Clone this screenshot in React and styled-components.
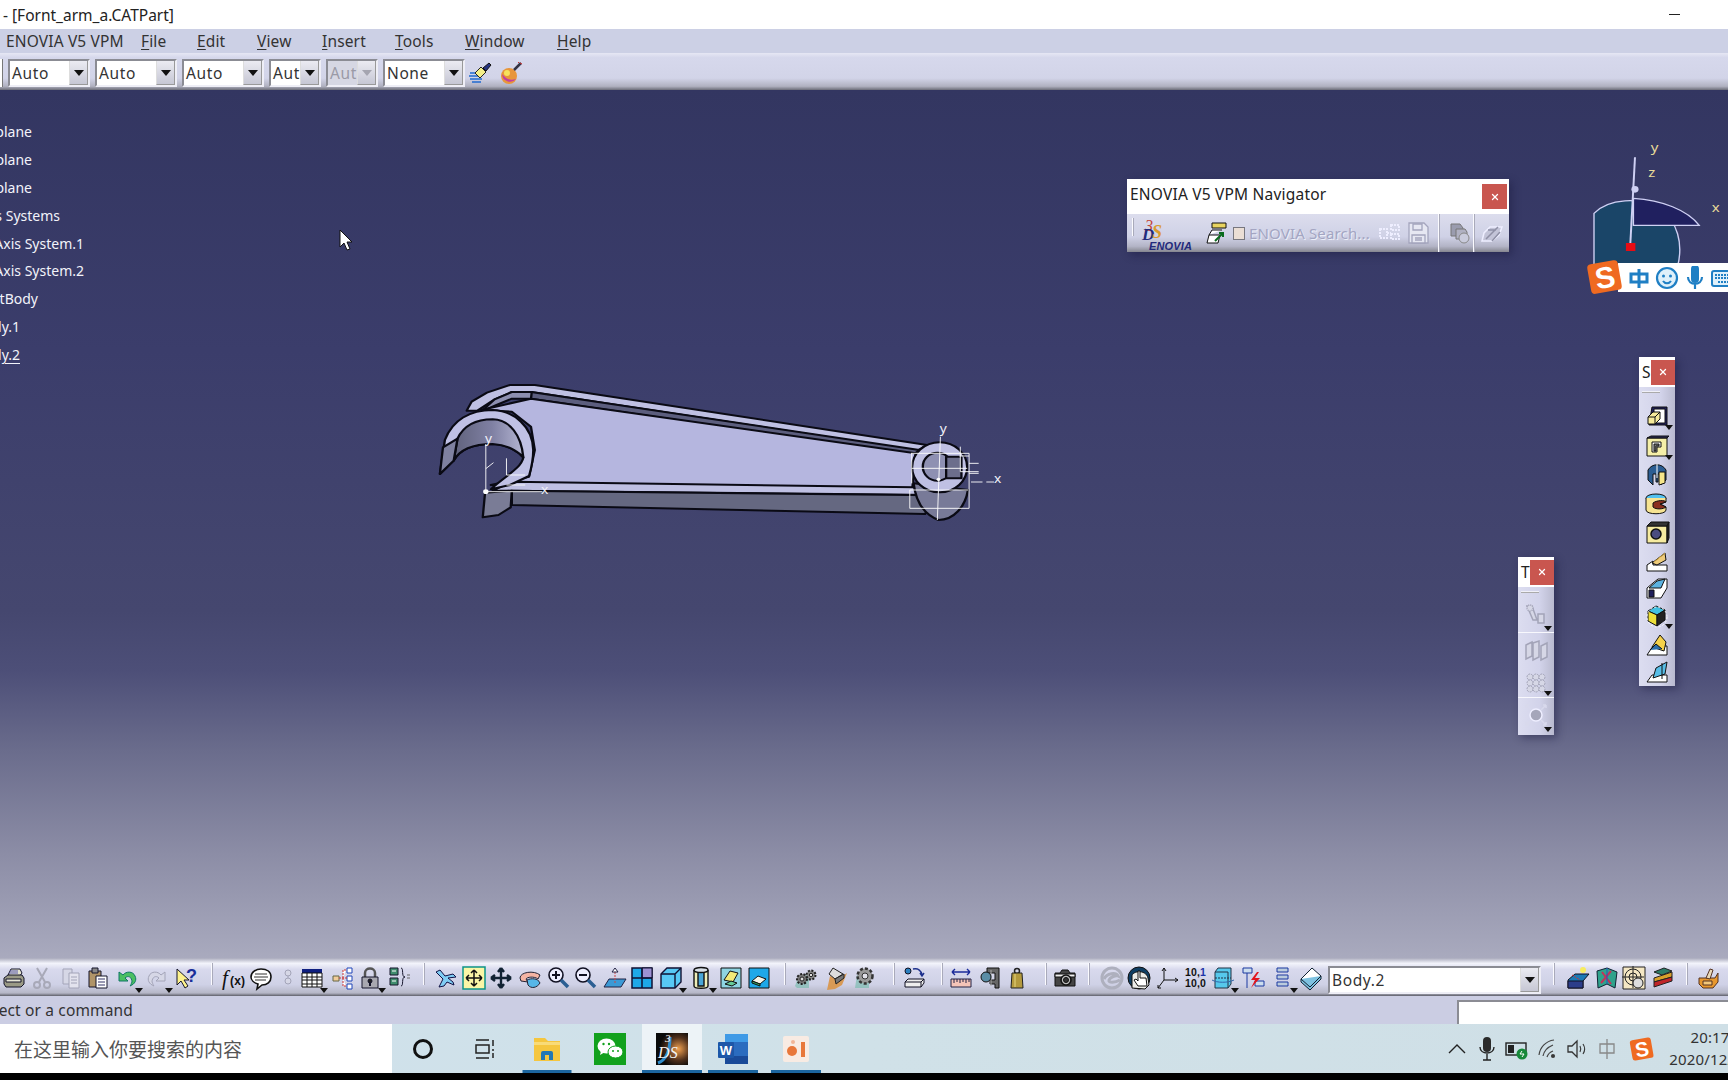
import React from 'react';
import styled, { createGlobalStyle } from 'styled-components';
import { X } from 'lucide-react';

const Global = createGlobalStyle`
  html, body { margin: 0; padding: 0; background: #000; }
  #root { width: 1728px; height: 1080px; overflow: hidden; }
  * { box-sizing: border-box; }
`;
const UI = `"Noto Sans", "Open Sans", sans-serif`;

const Page = styled.div`
  width: 1728px; height: 1080px; display: flex; flex-direction: column; overflow: hidden;
  font-family: ${UI}; font-size: 15.5px; letter-spacing: .15px; color: #222; background: #000;
`;
const TitleBar = styled.div`
  height: 29px; flex: none; background: #fff; display: flex; align-items: center; justify-content: space-between;
  padding: 0 48px 0 3px; color: #222; letter-spacing: 0;
`;
const MinLine = styled.span`width: 11px; height: 1px; background: #222;`;
const MenuBar = styled.div`
  height: 24px; flex: none; background: #ccd0e5; display: flex; align-items: center; padding-left: 6px; color: #333;
`;
const MenuItem = styled.span`
  width: ${p => p.$w}px; flex: none; white-space: nowrap;
  u { text-underline-offset: 2px; }
`;
const TopBar = styled.div`
  height: 37px; flex: none; display: flex; align-items: center; gap: 5px; padding-top: 3px;
  background: linear-gradient(#e6e7f4 0, #d6d8ec 12%, #d2d4e8 68%, #b0b1c0 90%, #6c6d78 100%);
`;
const Stub = styled.div`width: 3px; height: 28px; background: #fff; border-right: 1px solid #777;`;
const Combo = styled.div`
  width: ${p => p.$w}px; height: 28px; flex: none; display: flex; align-items: center; justify-content: space-between;
  background: ${p => (p.$off ? '#d6d7e3' : '#fff')}; color: ${p => (p.$off ? '#9a9aa6' : '#333')};
  border: 2px solid; border-color: #8b8c94 #eeeef6 #eeeef6 #8b8c94; padding-left: 2px; overflow: hidden; letter-spacing: .6px;
`;
const ComboBtn = styled.div`
  width: 19px; height: 100%; flex: none; display: flex; align-items: center; justify-content: center;
  background: linear-gradient(#ebebf2, #c6c7d4); border-left: 1px solid #ddd; border-right: 1px solid #999; border-bottom: 1px solid #999;
  &::after { content: ''; border: 5px solid transparent; border-top: 6px solid ${p => (p.$off ? '#a5a5b0' : '#111')}; border-bottom: 0; }
`;
const Viewport = styled.div`
  flex: 1; position: relative; overflow: hidden;
  background: linear-gradient(#333661 0%, #3b3d6b 30%, #45476f 60%, #4d4f78 67%, #6a6c8c 76%, #8c8da6 88%, #a9aabe 100%);
`;
const Tree = styled.div`position: absolute; left: 0; top: 28px; display: flex; flex-direction: column; color: #f2f3fa;`;
const TreeRow = styled.div`
  height: 27.8px; width: ${p => p.$r}px; display: flex; align-items: center; justify-content: flex-end; white-space: nowrap;
  font-size: 14px; letter-spacing: 0; text-decoration: ${p => (p.$u ? 'underline' : 'none')}; text-underline-offset: 3px;
`;
const Canvas = styled.svg`
  position: absolute; left: ${p => p.$x}px; top: ${p => p.$y}px; width: ${p => p.$w}px; height: ${p => p.$h}px; overflow: visible;
`;
const Float = styled.div`
  position: absolute; left: ${p => p.$x}px; top: ${p => p.$y}px; width: ${p => p.$w}px; height: ${p => p.$h}px;
  display: flex; flex-direction: column; box-shadow: 3px 3px 8px rgba(25, 25, 60, .45);
`;
const FloatHead = styled.div`
  height: ${p => p.$h}px; flex: none; background: #fff; display: flex; align-items: center; justify-content: space-between;
  padding: 0 2px 0 3px; color: #222; overflow: hidden; white-space: nowrap;
`;
const FloatTitle = styled.span`margin-top: -5px; letter-spacing: .2px;`;
const Close = styled.div`
  width: 25px; height: 25px; flex: none; background: #c9564f; color: #fff; display: flex; align-items: center; justify-content: center;
`;
const NavBody = styled.div`
  flex: 1; display: flex; align-items: center;
  background: linear-gradient(#dcdded 0, #cfd1e6 60%, #b3b4c6 85%, #85868f 100%);
`;
const NavGrip = styled.span`width: 2px; height: 18px; margin: -12px 5px 0 5px; background: #fbfbff; border-right: 1px solid #a9aaba; flex: none;`;
const NavSep = styled.span`width: 2px; height: 38px; background: #fbfbff; border-right: 1px solid #a9aaba; flex: none;`;
const VBody = styled.div`
  flex: 1; display: flex; flex-direction: column; position: relative;
  background: linear-gradient(90deg, #dcddf0, #d2d3ea 60%, #b9bacf);
`;
const Grip = styled.div`height: 2px; width: 18px; background: #f0f0f8; border-bottom: 1px solid #aaa; margin: 4px 0 ${p => p.$mb}px 3px; flex: none;`;
const HSep = styled.div`height: 1px; width: 100%; background: #f8f8fd; flex: none;`;
const VSlot = styled.div`
  height: ${p => p.$h}px; flex: none; display: flex; align-items: center; justify-content: center; position: relative; padding-right: 1px; padding-top: ${p => p.$pt || 0}px;
`;
const Slot = styled.div`
  width: ${p => p.$w}px; flex: none; position: relative; display: flex; align-items: center; margin-left: ${p => p.$ml || 0}px;
`;
const Spacer = styled.div`width: ${p => p.$w}px; flex: none;`;
const Drop = styled.span`
  position: absolute; left: ${p => p.$l}px; top: ${p => p.$t}px; width: 0; height: 0;
  border: 4px solid transparent; border-top: 5px solid #111; border-bottom: 0;
`;
const Sep = styled.span`
  width: 2px; height: 22px; margin-left: 11px; margin-top: -8px; background: #fbfbff; border-right: 1px solid #a9aaba;
`;
const Glyph = styled.svg`width: 24px; height: 24px; flex: none; display: block; overflow: visible;`;
const DsLogo = styled.svg`width: 52px; height: 36px; flex: none; display: block; overflow: visible;`;
const BottomBar = styled.div`
  height: 38px; flex: none; display: flex; align-items: center; padding-top: 2px;
  background: linear-gradient(#a9aabc 0, #f3f4fb 14%, #d8d9ed 30%, #cfd1e6 70%, #b6b7c7 92%, #5f606a 100%);
`;
const BodyCombo = styled(Combo)`margin-top: 4px;`;
const StatusBar = styled.div`
  height: 28px; flex: none; display: flex; align-items: center; justify-content: space-between; background: #cbcde3;
`;
const StatusText = styled.div`width: 133px; display: flex; justify-content: flex-end; white-space: nowrap; color: #333;`;
const StatusBox = styled.div`
  width: 271px; height: 24px; align-self: flex-end; background: #fff; border-left: 2px solid #8b8c94; border-top: 2px solid #8b8c94;
`;
const Taskbar = styled.div`
  height: 49px; flex: none; display: flex; align-items: center;
  background: linear-gradient(90deg, #cfe1ec, #d0e1e8 50%, #cfdfe6);
`;
const BlackStrip = styled.div`flex: none; height: 7px; background: #000;`;
const SearchBox = styled.div`
  width: 392px; height: 100%; flex: none; background: #fff; display: flex; align-items: center; padding-left: 14px;
  font: 19px "Noto Sans CJK SC", sans-serif; letter-spacing: 0; color: #555;
`;
const Tile = styled.div`
  width: ${p => p.$w}px; height: 100%; flex: none; position: relative; display: flex; align-items: center; justify-content: center;
  background: ${p => (p.$active ? '#edf3f7' : 'transparent')};
  &::after {
    content: ''; display: ${p => (p.$under ? 'block' : 'none')}; position: absolute; bottom: 0; left: 50%; height: 3px;
    width: ${p => p.$under}px; transform: translateX(-50%); background: #1c669f;
  }
`;
const BigGlyph = styled.svg`width: 32px; height: 32px; display: block;`;
const TrayGlyph = styled.svg`width: 26px; height: 26px; display: block; flex: none;`;
const Clock = styled.div`
  width: 84px; flex: none; display: flex; flex-direction: column; align-items: center; gap: 3px; line-height: 19px; color: #333; white-space: nowrap; font-size: 15px;
`;
const ImeBar = styled.div`
  position: absolute; left: 1618px; top: 173px; width: 110px; height: 29px; background: #fff; display: flex; align-items: center; gap: 4px; padding-left: 9px;
`;
const ImeLogo = styled.svg`position: absolute; left: 1586px; top: 168px; width: 38px; height: 38px;`;
const ImeGlyph = styled.svg`width: 24px; height: 24px; flex: none;`;
const Cursor = styled.svg`position: absolute; left: 339px; top: 139px; width: 14px; height: 22px;`;
const NavSearch = styled.span`color: #a3a5c2; text-shadow: 1px 1px 0 #eceef8; white-space: nowrap; font-size: 15px;`;
const Check = styled.span`width: 12px; height: 13px; background: #eaded5; border: 1px solid #77777f; flex: none;`;

const K = '#15152b';
const dis = { fill: '#d6d7e6', stroke: '#a3a4b8' };
const I = {
  print: <g stroke={K}><path d="M6 9l3-6h9l2 4-3 4z" fill="#e4e4d0"/><path d="M2 12l4-3h14l2 3v6l-3 3H4l-2-3z" fill="#9a9a86"/><path d="M4 13h15v3H4z" fill="#e8e8d8"/><path d="M8 5h8M7 7h9" stroke="#55a"/></g>,
  cut: <g fill="none" stroke="#a8a9b8" strokeWidth="2"><path d="M7 2l8 14M17 2L9 16"/><circle cx="7" cy="19" r="3"/><circle cx="17" cy="19" r="3"/></g>,
  copy: <g {...dis}><path d="M4 3h9v15H4z"/><path d="M10 7h10v15H10z" fill="#e3e3ee"/><path d="M12 11h6M12 14h6M12 17h6"/></g>,
  paste: <g stroke={K}><path d="M3 5h12v16H3z" fill="#b09468"/><path d="M6 2h6v5H6z" fill="#888"/><path d="M10 10h11v12H10z" fill="#fff"/><path d="M12 13h7M12 16h7M12 19h7" stroke="#336"/></g>,
  undo: <g><path d="M4 6v9h9l-3-3c3-3 7-1 7 4-1 2-1 3-2 4 5-2 7-6 5-10-2-5-9-5-12-1z" fill="#4bbf62" stroke="#176"/></g>,
  redo: <g {...dis}><path d="M20 6v9h-9l3-3c-3-3-7-1-7 4 1 2 1 3 2 4-5-2-7-6-5-10 2-5 9-5 12-1z"/></g>,
  help: <g><path d="M3 3v16l4-4 4 7 3-2-4-6h5z" fill="#fdf28c" stroke={K}/><text x="12" y="16" fontSize="18" fontWeight="700" fontFamily="Liberation Sans" fill="#1a2f9a">?</text></g>,
  fx: <g><text x="0" y="19" fontSize="21" fontStyle="italic" fontFamily="Liberation Serif" fill="#111">f</text><text x="8" y="19" fontSize="12" fontFamily="Liberation Sans" fontWeight="700" fill="#111">(x)</text></g>,
  talk: <g><path d="M12 3c6 0 10 3 10 8s-4 8-9 8l-5 4 1-5c-4-1-7-4-7-7 0-5 5-8 10-8z" fill="#fff" stroke="#111" strokeWidth="1.6"/><path d="M6 8h12M5 11h14M6 14h11" stroke="#333"/></g>,
  grayk: <g {...dis}><circle cx="12" cy="7" r="3"/><circle cx="12" cy="15" r="3"/><path d="M12 10v2"/></g>,
  table: <g><path d="M2 3h20v4H2z" fill="#0f1f80"/><path d="M2 7h20v14H2z" fill="#fff" stroke="#111"/><path d="M7 7v14M12 7v14M17 7v14M2 11h20M2 14h20M2 18h20" stroke="#111"/></g>,
  tree: <g stroke="#1f45b8" fill="#fff"><path d="M3 10h6v5H3z" fill="#f1cd9c" stroke="#664"/><path d="M17 2h5v5h-5zM17 10h5v5h-5zM17 18h5v5h-5z"/><path d="M9 12h8M13 12V4h3M13 12v8h3" strokeDasharray="2 1" stroke="#c33"/></g>,
  lock: <g stroke={K}><path d="M7 11V7c0-6 10-6 10 0v4" fill="none" strokeWidth="2.5" stroke="#555"/><path d="M4 11h16v11H4z" fill="#a8a8b0"/><circle cx="12" cy="15" r="2" fill="#222"/><path d="M12 16v4" strokeWidth="2"/></g>,
  params: <g stroke={K}><path d="M3 2h8v7H3zM3 12h8v7H3z" fill="#3f8d6e"/><path d="M5 5h4M5 15h4" stroke="#fff"/><path d="M14 2c3 0 0 9 4 9-4 0-1 9-4 9" fill="none"/><path d="M20 9h3M20 12h3" stroke="#666"/></g>,
  fly: <g stroke="#114"><path d="M2 6l7 7-4 8 5-1 3-4 7 3-1-3-5-4 8-1-3-3-8 2-5-6z" fill="#7fcdf4"/></g>,
  fit: <g><path d="M1 1h22v22H1z" fill="#faf6a6" stroke="#0d9488" strokeWidth="1.5"/><path d="M12 4v16M4 12h16M12 4l-3 3M12 4l3 3M12 20l-3-3M12 20l3-3M4 12l3-3M4 12l3 3M20 12l-3-3M20 12l-3 3" stroke="#111" strokeWidth="1.5" fill="none"/></g>,
  pan: <g stroke="#123" strokeWidth="2.4" fill="none"><path d="M12 2v20M2 12h20M12 2l-3 4M12 2l3 4M12 22l-3-4M12 22l3-4M2 12l4-3M2 12l4 3M22 12l-4-3M22 12l-4 3"/></g>,
  rotate: <g stroke="#223"><path d="M2 12c0-6 14-8 20-3l-2 4c-4-3-11-2-12 0l2 3-7-1z" fill="#f4b4a4"/><path d="M9 14c4-2 11-2 13 3-3 5-9 6-12 2z" fill="#56b7e8"/></g>,
  zin: <g stroke="#112"><circle cx="9" cy="9" r="7" fill="#eef" strokeWidth="1.6"/><path d="M5 9h8M9 5v8" strokeWidth="2"/><path d="M14 14l7 7" strokeWidth="3.5" stroke="#2b5f93"/></g>,
  zout: <g stroke="#112"><circle cx="9" cy="9" r="7" fill="#eef" strokeWidth="1.6"/><path d="M5 9h8" strokeWidth="2"/><path d="M14 14l7 7" strokeWidth="3.5" stroke="#2b5f93"/></g>,
  normal: <g stroke="#224"><path d="M1 21l5-8h17l-5 8z" fill="#3b9ad6"/><path d="M12 17V6" stroke="#c44" strokeDasharray="2 1"/><path d="M9 6l3-4 3 4z" fill="#fff"/></g>,
  quad: <g stroke="#113"><path d="M2 2h20v20H2z" fill="#1ea8e8" strokeWidth="1.5"/><path d="M12 2h10v10H12z" fill="#9e92d4"/><path d="M12 2v20M2 12h20" strokeWidth="1.5"/></g>,
  cube: <g stroke="#113" strokeWidth="1.4"><path d="M2 8l6-6h14v14l-6 6H2z" fill="#57c8f5"/><path d="M2 8h14v14M16 8l6-6" fill="none"/></g>,
  cyl: <g stroke="#111" strokeWidth="1.4"><path d="M5 4v16c0 3 14 3 14 0V4" fill="#eeeeb8"/><path d="M9 5h6v15H9z" fill="#4aa6d8"/><ellipse cx="12" cy="4" rx="7" ry="2.5" fill="#d8e0e8"/></g>,
  shade: <g stroke="#111"><path d="M2 2h20v20H2z" fill="#8ed4e2"/><path d="M5 14l6-9 8 2-5 9z" fill="#f2e978"/><path d="M6 18l6-3 6 2-5 3z" fill="#6c9"/></g>,
  shade2: <g stroke="#111"><path d="M2 2h20v20H2z" fill="#1ea8e8"/><path d="M5 15l6-5 8 3-6 5z" fill="#f6f6e8"/><path d="M5 15v2l8 3v-2z" fill="#3a6"/></g>,
  gears: <g stroke="#222"><path d="M1 20l4-11h10v13H3z" fill="#7ebcb0" stroke="none" opacity=".7"/><circle cx="8" cy="13" r="5" fill="#777" strokeWidth="2" strokeDasharray="2 1.5"/><circle cx="17" cy="9" r="4.5" fill="#888" strokeWidth="2" strokeDasharray="2 1.5"/><circle cx="8" cy="13" r="2" fill="#ddd"/><circle cx="17" cy="9" r="1.7" fill="#ddd"/></g>,
  wb: <g stroke="#222"><path d="M3 24l3-14 8 3 9-6-5 12-7 4z" fill="#d89a56" stroke="none"/><path d="M5 8l4-6 10 6-8 5z" fill="#ddd"/><path d="M11 13l9-5v4l-8 6z" fill="#777"/></g>,
  gear1: <g stroke="#333"><path d="M2 22l2-13h12v13z" fill="#7ebcb0" stroke="none" opacity=".7"/><circle cx="12" cy="10" r="7.5" fill="#999" strokeWidth="2.5" strokeDasharray="3 2"/><circle cx="12" cy="10" r="3" fill="#e0e0e8"/></g>,
  swap: <g stroke="#112"><path d="M3 16l3-3h16v4l-3 4H3z" fill="#eee"/><path d="M3 16h16v5M19 16l3-3" fill="none"/><circle cx="6" cy="5" r="3" fill="#2a7fc0"/><path d="M11 3c5-1 8 1 9 6M18 7l2 3 2-3" fill="none" stroke="#1c2f8c" strokeWidth="1.5"/></g>,
  measure: <g><path d="M3 6h18M3 6l3-3M3 6l3 3M21 6l-3-3M21 6l-3 3" stroke="#1b2b9a" strokeWidth="1.4" fill="none"/><path d="M2 13h20v8H2z" fill="#f4c4b8" stroke="#224"/><path d="M5 13v4M8 13v3M11 13v4M14 13v3M17 13v4M20 13v3" stroke="#224"/></g>,
  inertia: <g stroke="#111"><path d="M9 2h12v20h-4V18H12v-4h5V7H9z" fill="#666"/><path d="M13 4v16" stroke="#aaa"/><circle cx="8" cy="11" r="5" fill="#5a8da6"/></g>,
  weight: <g stroke="#222"><circle cx="12" cy="5" r="2.5" fill="none" strokeWidth="1.5"/><path d="M7 7h10l1 15H6z" fill="#b49a3e"/><path d="M10 8v13" stroke="#e8d77e"/></g>,
  camera: <g stroke="#111"><path d="M2 7h5l2-3h6l2 3h5v13H2z" fill="#444"/><path d="M2 8h20v3H2z" fill="#eee"/><circle cx="13" cy="14" r="5" fill="#bbb" strokeWidth="1.6"/><circle cx="13" cy="14" r="2.5" fill="#333"/></g>,
  spiral: <g fill="none" stroke="#aeb0be" strokeWidth="3"><circle cx="12" cy="12" r="10"/><path d="M4 13c3-6 12-7 14-3-2-1-8 1-9 4s6 3 11 0"/></g>,
  hand: <g stroke="#111"><circle cx="12" cy="12" r="11" fill="#0e3d62"/><path d="M5 22V10c0-5 14-7 16 2l1 7-4 4z" fill="#ecece8"/><path d="M11 20l-4-6 2-1 2 2V5h2v7h6l1 8z" fill="#fff"/></g>,
  axis: <g stroke="#111" fill="none"><path d="M8 14V2M6 5l2-3 2 3M8 14h14M19 12l3 2-3 2M8 14l-6 8M2 19v3h3"/></g>,
  grid: <g fontFamily="Liberation Sans" fontSize="10.5" fontWeight="700" fill="#111"><text x="1" y="10">10,<tspan fill="#1c33a8">1</tspan></text><text x="1" y="21">10,0</text></g>,
  box: <g stroke="#234"><path d="M4 6l3-4h13v16l-3 4H4z" fill="#56c8ec"/><path d="M4 6h13v16" fill="none"/><path d="M4 12h16" strokeDasharray="2 1"/><path d="M1 14c5 3 16 3 22 0" fill="none" stroke="#36a"/></g>,
  red: <g><path d="M2 2h9v5H2zM14 15h9v5h-9z" fill="#cde" stroke="#1b39a0"/><path d="M6 7v15" stroke="#1b39a0"/><path d="M16 6l-6 8h4l-4 8 9-10h-5l4-6z" fill="#e2141e"/></g>,
  list: <g fill="#bcd" stroke="#1b39a0"><path d="M7 2h11v4H7zM7 9h11v4H7zM7 16h11v4H7z"/></g>,
  book: <g stroke="#123"><path d="M2 13L13 2l9 8-11 11z" fill="#fff"/><path d="M2 13v3l9 8 11-11v-3" fill="#7ec2e0"/><path d="M2 13l9 8L22 10" fill="none"/></g>,
  edge: <g stroke="#112"><path d="M2 14l7-6h14l-6 7v7H2z" fill="#1a79b6"/><path d="M2 15h15v7H2z" fill="#2c3d8a"/><path d="M6 9l8 5" stroke="#c33" strokeDasharray="2 1"/><circle cx="17" cy="4" r="3" fill="#f7ec5f" stroke="none"/></g>,
  map: <g stroke="#123"><path d="M2 5l10-3 10 4-2 16-8-4-9 4z" fill="#2fa28c"/><path d="M7 6l9 12M16 5L6 17" stroke="#c2325a" strokeWidth="2"/><path d="M12 2v16" stroke="#2255c2"/></g>,
  target: <g stroke="#222"><path d="M1 1h22v22H1z" fill="#f4e7c4"/><circle cx="11" cy="11" r="8" fill="none"/><circle cx="11" cy="11" r="4" fill="none"/><path d="M11 0v22M0 11h22"/><circle cx="16" cy="17" r="5" fill="#ddd"/></g>,
  layer: <g stroke="#222"><path d="M3 6l10-4 8 3-10 4z" fill="#2d7d68"/><path d="M3 12l18-6v5L3 16z" fill="#d8a02a"/><path d="M3 16l18-5v4L3 21z" fill="#c0252a"/></g>,
  hand2: <g stroke="#532"><path d="M2 12h16l3-5v9l-5 6H6l-4-4z" fill="#e8982e"/><path d="M9 12l4-9 3 1-3 9z" fill="#e8d8b8"/><path d="M6 15h9v4H6z" fill="#f3c77a"/></g>,
  brush: <g><path d="M2 12h14M1 15h13M2 18h12M4 21h9" stroke="#1f6ad0" strokeWidth="1.5"/><path d="M7 12l6-6 5 5-6 6z" fill="#f4ef8a" stroke="#222"/><path d="M15 7l6-5 2 2-5 6z" fill="#24327f" stroke="#111"/></g>,
  ball: <g><circle cx="10" cy="15" r="8" fill="#e8963a"/><path d="M3 13a8 8 0 0 0 14 5c-6 2-10 0-14-5z" fill="#c23fa0"/><circle cx="8" cy="12" r="3" fill="#f6e25c"/><path d="M15 9l7-7" stroke="#334" strokeWidth="2.5"/><path d="M21 2l2 1M19 1l1 1" stroke="#c33"/></g>,
  link: <g stroke="#111"><path d="M2 22l2-8h11l-2 8zM4 14l3-5h10" fill="#fff"/><path d="M7 2h14v5H7z" fill="#e8d460"/><path d="M10 20l8-8M14 12h4v4" stroke="#0a6b1e" strokeWidth="2" fill="none"/></g>,
  dots: <g stroke="#eef" fill="none" strokeWidth="2" strokeDasharray="2 1"><path d="M3 8h7v9H3zM14 4h8v5h-8zM14 13h8v5h-8zM10 12h4"/></g>,
  floppy: <g stroke="#a4a5bd" fill="#e6e7f2" strokeWidth="1.3"><path d="M3 2h15l4 4v16H3z"/><path d="M7 3h9v6H7zM6 14h13v8H6z"/><path d="M9 17h7M9 19h7"/></g>,
  docs: <g><path d="M3 3h9l3 4v8H3z" fill="#9a9cae" stroke="#777"/><path d="M8 8h9l2 3v7H8z" fill="#b0b1c2" stroke="#777"/><circle cx="16" cy="17" r="5" fill="#c9cbdc" stroke="#888"/></g>,
  syncd: <g fill="#c3c4d8" stroke="#eef" strokeWidth="1.5"><path d="M2 20l2-8 6-6h12l-3 8-7 6z"/><path d="M6 18l12-12M12 20l8-9M8 9h8" stroke="#8f90a6" fill="none"/></g>,
  pad: <g stroke="#111"><path d="M7 2h15v18H4z" fill="#1f1f5c"/><path d="M9 4h11v14H9z" fill="#fff"/><path d="M3 12l5-5h7v7l-5 5H3z" fill="#f7eb9b"/><path d="M3 12h7v7M10 12l5-5" fill="none"/></g>,
  pock: <g stroke="#111"><path d="M2 4h20v18H2z" fill="#f5efa8"/><path d="M6 2h18l-2 2H2z" fill="#2a2a5a"/><path d="M7 8h9v5h-4v5H7z" fill="#f8f8f8"/><path d="M9 10h5v2h-3v5H9z" fill="#777"/></g>,
  shaft: <g stroke="#111"><path d="M3 6c4-7 14-7 18 0v10l-5 5V10h-3v8h-2V10H8v11l-5-5z" fill="#2b5d92"/><path d="M14 8h6v11l-6 2z" fill="#f6e68a"/><path d="M12 0v14" stroke="#fff"/></g>,
  groove: <g stroke="#111"><ellipse cx="11" cy="6" rx="10" ry="4" fill="#52c0f0"/><path d="M1 6v12c0 5 20 5 20 0v-3l-6-3 6-2V6" fill="#f6e392"/><path d="M8 11c4-3 12-3 13-1l-6 2 6 3c-2 2-10 3-13 0z" fill="#8a2f1f"/></g>,
  hole: <g stroke="#111"><path d="M2 6h20v17H2z" fill="#f6eba0"/><path d="M6 2h18l-2 4H2z" fill="#333"/><path d="M22 6l2-4v16l-2 5z" fill="#222"/><circle cx="11" cy="14" r="5" fill="#4b4c80" strokeWidth="1.5"/></g>,
  rib: <g stroke="#111"><path d="M2 22v-6l6-4v4h14v6z" fill="#fff"/><path d="M7 14l13-10 1 7-9 5z" fill="#eecb7a"/><path d="M9 13l11-9" stroke="#c8a040"/></g>,
  slot: <g stroke="#111"><path d="M2 22V12l6-5 5-4h9v9l-6 10z" fill="#fff"/><path d="M12 5l8-2-4 9H4z" fill="#5cb3e0"/><path d="M4 14h5v7H4z" fill="#1f1f5c"/></g>,
  solid: <g stroke="#111"><path d="M3 7l8-5 9 4-8 5z" fill="#42c0e0"/><path d="M3 7v10l9 5V11z" fill="#ecdf3a"/><path d="M12 11l8-5v10l-8 6z" fill="#222"/><circle cx="12" cy="13" r="10" fill="none" stroke="#fff" strokeDasharray="2 2"/></g>,
  mfsolid: <g stroke="#111"><path d="M2 22l6-9h14v9z" fill="#fff"/><path d="M7 14L15 2l6 7-2 9z" fill="#f6d24a"/><path d="M5 17l6-6 6 5" fill="#2c6da8"/></g>,
  solid2: <g stroke="#111"><path d="M2 22l5-7h15v7z" fill="#fff"/><path d="M8 18l3-10 11-6-2 12z" fill="#58bde6"/><path d="M17 3v16" stroke="#111"/></g>,
  tr1: <g {...dis} strokeWidth="1.5"><path d="M3 3h5l5 14h-4zM14 11h6v9h-6z"/><circle cx="6" cy="5" r="3" strokeDasharray="1 1"/></g>,
  tr2: <g {...dis} strokeWidth="1.5"><path d="M2 6l6-3v14l-6 3zM9 4l6-2v16l-6 3zM17 7l6-3v14l-6 3z"/></g>,
  tr3: <g {...dis} strokeDasharray="2 1"><circle cx="6" cy="6" r="3"/><circle cx="12" cy="6" r="3"/><circle cx="18" cy="6" r="3"/><circle cx="6" cy="12" r="3"/><circle cx="12" cy="12" r="3"/><circle cx="18" cy="12" r="3"/><circle cx="6" cy="18" r="3"/><circle cx="12" cy="18" r="3"/><circle cx="18" cy="18" r="3"/></g>,
  tr4: <g stroke="#eef" fill="none" strokeWidth="1.5"><circle cx="12" cy="12" r="6" fill="#a5a6ba"/><path d="M2 2l5 5M22 2l-5 5M2 22l5-5M22 22l-5-5M2 2h3M2 2v3M22 2h-3M22 2v3M2 22h3M2 22v-3M22 22h-3M22 22v-3" stroke="#d8d9ec"/></g>,
};
const Icon = ({ n }) => <Glyph viewBox="0 0 24 24">{I[n]}</Glyph>;

const bottom = [
  ['print',14],['cut',42],['copy',71],['paste',98],['undo',127,1],['redo',157,1],['help',186],['|',212],['fx',234],['talk',261],['grayk',288],
  ['table',312,1],['tree',342],['lock',370,1],['params',399],['|',424],['fly',446],['fit',474],['pan',501],['rotate',530],['zin',559],['zout',586],
  ['normal',615],['quad',642],['cube',671,1],['cyl',701,1],['shade',731],['shade2',759],['|',785],['gears',806],['wb',836],['gear1',865],['|',894],
  ['swap',914],['|',942],['measure',961],['inertia',990],['weight',1017],['|',1046],['camera',1065],['|',1089],['spiral',1112],['hand',1139],['axis',1168],
  ['grid',1196],['box',1223,1],['red',1253],['list',1282,1],['book',1311],['combo',1340],['|',1554],['edge',1578],['map',1607],['target',1634],['layer',1663],['|',1687],['hand2',1709],
];

const Row = ({ items }) => (
  <>
    <Spacer $w={items[0][1] - 12} />
    {items.map(([n, c, drop], i) => {
      const next = items[i + 1] ? items[i + 1][1] : c + 24;
      return (
        <Slot key={i} $w={next - c}>
          {n === '|' ? <Sep /> : n === 'combo' ? (
            <BodyCombo $w={213}>Body.2<ComboBtn /></BodyCombo>
          ) : <Icon n={n} />}
          {drop ? <Drop $l={20} $t={22} /> : null}
        </Slot>
      );
    })}
  </>
);

const tray = [
  [1457, <path d="M5 17l8-8 8 8" fill="none" stroke="#222" strokeWidth="1.4"/>],
  [1487, <g><rect x="9" y="1" width="8" height="15" rx="4" fill="#2a2a2a"/><path d="M6 11c0 8 14 8 14 0M13 18v6M9 24h8" fill="none" stroke="#222" strokeWidth="1.4"/></g>],
  [1516, <g><rect x="3" y="7" width="20" height="12" fill="none" stroke="#222" strokeWidth="1.4"/><rect x="5" y="9" width="6" height="8" fill="#222"/><circle cx="19" cy="18" r="5.5" fill="#17893a"/><path d="M19 15l-2 3h4l-2 3" stroke="#fff" fill="none"/></g>],
  [1548, <g fill="none" stroke="#444" strokeWidth="1.2"><path d="M4 19C5 11 11 5 19 4M8 20c1-5 5-9 10-11M12 21c1-3 3-5 6-6"/><circle cx="18" cy="20" r="1.5" fill="#333"/></g>],
  [1576, <g fill="none" stroke="#333" strokeWidth="1.3"><path d="M5 10h4l5-5v16l-5-5H5z"/><path d="M17 10c1 2 1 4 0 6M20 8c2 3 2 7 0 10" strokeWidth="1.1"/></g>],
  [1607, <path d="M6 8h14v9H6zM13 3v20" fill="none" stroke="#888" strokeWidth="1.3"/>],
];

const Part = () => (
  <Canvas $x={420} $y={280} $w={600} $h={170} viewBox="0 0 1568 510" preserveAspectRatio="none">
    <g stroke="#0a0a14" strokeWidth="6" strokeLinejoin="round">
      <path d="M122 122L135 95L175 68L235 45H300L1325 225L1300 242L292 66H240L195 88L150 122Z" fill="#bfc0e3"/>
      <path d="M290 66L1305 240L1290 254L290 86Z" fill="#5c5e7e"/>
      <path d="M195 88L240 66H292L290 86H240L200 105L160 125Z" fill="#8d8fb0"/>
      <path d="M290 86L1295 250L1285 375L185 345L285 320L300 240L290 170L240 125L160 120Z" fill="#b5b6df"/>
      <path d="M240 335L1290 352L1345 375L190 362Z" fill="#bfc0e3"/>
      <path d="M240 362L1345 376L1320 432L240 405Z" fill="#656881"/>
      <path d="M170 368L240 362L237 412L205 435L164 442Z" fill="#7a7c96"/>
      <path d="M296 240C295 170 245 122 190 120C130 120 85 150 65 210L52 312L88 272C105 235 140 222 190 222C235 225 262 250 270 262C265 295 220 320 185 358L235 345L285 318C292 290 296 265 296 240Z" fill="#c0c1e5"/>
      <linearGradient id="cyl" x1="0" x2="1" y1="0" y2="0"><stop offset="0" stopColor="#60627c"/><stop offset=".55" stopColor="#7f80a3"/><stop offset="1" stopColor="#b4b5d2"/></linearGradient>
      <path d="M98 206C115 165 150 148 190 148C235 150 265 195 270 262C262 250 235 225 190 222C140 222 105 235 88 272Z" fill="url(#cyl)"/>
      <path d="M52 312L60 232L98 206L88 272Z" fill="#7f81a0"/>
      <path d="M1290 340C1295 390 1315 432 1355 450C1395 450 1425 410 1432 360Z" fill="#787a98"/>
      <ellipse cx="1358" cy="292" rx="72" ry="75" fill="#bfc0e3"/>
      <ellipse cx="1352" cy="290" rx="38" ry="42" fill="#8e90b2"/>
      <path d="M1375 260H1415V325H1375Z" fill="#6c6e8c"/>
    </g>
    <g stroke="#fff" strokeWidth="2.5" fill="none">
      <path d="M172 222V365H320M172 296L192 278M226 265V315H275M226 345H275"/>
      <path d="M1360 200L1352 450M1285 295H1430M1283 250H1435V415H1280V360M1280 360H1432M1285 250V340M1412 230V305H1460M1410 258H1435M1435 280H1460M1435 310H1460M1440 336H1470M1480 336H1500"/>
    </g>
    <circle cx="172" cy="365" r="7" fill="#fff"/>
    <circle cx="1355" cy="328" r="5" fill="#fff"/>
    <g fill="#f2f2fa" fontFamily="Noto Sans" fontSize="36">
      <text x="170" y="218">y</text><text x="316" y="372">x</text><text x="1358" y="188">y</text><text x="1500" y="340">x</text>
    </g>
  </Canvas>
);

const Compass = () => (
  <Canvas $x={1110} $y={40} $w={618} $h={170} viewBox="0 0 1568 510" preserveAspectRatio="none">
    <path d="M1228 410V250C1265 205 1345 200 1395 235C1440 275 1455 340 1440 410Z" fill="#1a4568" stroke="#cfd0f4" strokeWidth="3.5"/>
    <path d="M1328 205C1400 210 1465 240 1495 286H1328Z" fill="#20205f" stroke="#cfd0f4" strokeWidth="3.5"/>
    <path d="M1332 82L1320 345" stroke="#cfd0f4" strokeWidth="5"/>
    <ellipse cx="1332" cy="178" rx="9" ry="10" fill="#cfd0f4"/>
    <rect x="1309" y="339" width="24" height="24" fill="#e80c14"/>
    <g fill="#e9dc9a" fontFamily="Noto Sans" fontSize="38">
      <text x="1372" y="66">y</text><text x="1366" y="142">z</text><text x="1527" y="245">x</text>
    </g>
  </Canvas>
);

const SLogo = () => (
  <g transform="rotate(-10 19 19)"><rect x="3" y="4" width="31" height="30" rx="4" fill="#ef6a21"/><text x="19" y="30" textAnchor="middle" fontSize="30" fontWeight="900" fontFamily="Liberation Sans" fill="#fff">S</text></g>
);

const CloseBtn = () => <Close><X size={10} strokeWidth={3} /></Close>;

export default function App() {
  return (
    <Page>
      <Global />
      <TitleBar>- [Fornt_arm_a.CATPart]<MinLine /></TitleBar>
      <MenuBar>
        <MenuItem $w={135}>ENOVIA V5 VPM</MenuItem>
        <MenuItem $w={56}><u>F</u>ile</MenuItem>
        <MenuItem $w={60}><u>E</u>dit</MenuItem>
        <MenuItem $w={65}><u>V</u>iew</MenuItem>
        <MenuItem $w={73}><u>I</u>nsert</MenuItem>
        <MenuItem $w={70}><u>T</u>ools</MenuItem>
        <MenuItem $w={92}><u>W</u>indow</MenuItem>
        <MenuItem $w={50}><u>H</u>elp</MenuItem>
      </MenuBar>
      <TopBar>
        <Stub />
        <Combo $w={82}>Auto<ComboBtn /></Combo>
        <Combo $w={82}>Auto<ComboBtn /></Combo>
        <Combo $w={82}>Auto<ComboBtn /></Combo>
        <Combo $w={52}>Aut<ComboBtn /></Combo>
        <Combo $w={52} $off>Aut<ComboBtn $off /></Combo>
        <Combo $w={82}>None<ComboBtn /></Combo>
        <Slot $w={26} $ml={-2}><Icon n="brush" /></Slot>
        <Slot $w={24}><Icon n="ball" /></Slot>
      </TopBar>
      <Viewport>
        <Tree>
          <TreeRow $r={32}>xy plane</TreeRow>
          <TreeRow $r={32}>yz plane</TreeRow>
          <TreeRow $r={32}>zx plane</TreeRow>
          <TreeRow $r={60}>Axis Systems</TreeRow>
          <TreeRow $r={84}>Axis System.1</TreeRow>
          <TreeRow $r={84}>Axis System.2</TreeRow>
          <TreeRow $r={38}>PartBody</TreeRow>
          <TreeRow $r={20}>Body.1</TreeRow>
          <TreeRow $r={20} $u>Body.2</TreeRow>
        </Tree>
        <Cursor viewBox="0 0 14 22"><path d="M1 1V18L5 14L8 21L11 20L8 13H13Z" fill="#fff" stroke="#111" /></Cursor>
        <Part />
        <Float $x={1127} $y={89} $w={382} $h={73}>
          <FloatHead $h={35}><FloatTitle>ENOVIA V5 VPM Navigator</FloatTitle><CloseBtn /></FloatHead>
          <NavBody>
            <NavGrip />
            <DsLogo viewBox="0 0 52 36">
              <text x="6" y="16" fontSize="16" fontFamily="Liberation Serif" fontStyle="italic" fill="#c2453a">3</text>
              <text x="3" y="25" fontSize="17" fontFamily="Liberation Serif" fontStyle="italic" fontWeight="700" fill="#232a7c">D</text>
              <text x="13" y="23" fontSize="18" fontFamily="Liberation Serif" fontStyle="italic" fontWeight="700" fill="#d99a2e">S</text>
              <text x="10" y="35" fontSize="11" fontFamily="Liberation Sans" fontStyle="italic" fontWeight="700" fill="#232a7c">ENOVIA</text>
            </DsLogo>
            <Spacer $w={14} />
            <Icon n="link" />
            <Spacer $w={4} />
            <Check />
            <Spacer $w={4} />
            <NavSearch>ENOVIA Search...</NavSearch>
            <Spacer $w={7} />
            <Icon n="dots" />
            <Spacer $w={5} />
            <Icon n="floppy" />
            <Spacer $w={8} />
            <NavSep />
            <Spacer $w={8} />
            <Icon n="docs" />
            <Spacer $w={1} />
            <NavSep />
            <Spacer $w={5} />
            <Icon n="syncd" />
          </NavBody>
        </Float>
        <Compass />
        <ImeBar>
          <ImeGlyph viewBox="0 0 24 24"><path d="M4 8h16v8H4zM12 3v19" fill="none" stroke="#1f7fc4" strokeWidth="3"/></ImeGlyph>
          <ImeGlyph viewBox="0 0 24 24"><circle cx="12" cy="12" r="10" fill="#dff0fa" stroke="#1f7fc4" strokeWidth="2.2"/><circle cx="8.5" cy="10" r="1.5" fill="#1f7fc4"/><circle cx="15.5" cy="10" r="1.5" fill="#1f7fc4"/><path d="M8 15c2 3 6 3 8 0" fill="none" stroke="#1f7fc4" strokeWidth="2"/></ImeGlyph>
          <ImeGlyph viewBox="0 0 24 24"><path d="M8 3a4 4 0 0 1 8 0v10a4 4 0 0 1-8 0z" fill="#1f7fc4"/><path d="M5 11c0 9 14 9 14 0M12 18v5" fill="none" stroke="#1f7fc4" strokeWidth="2.2"/></ImeGlyph>
          <ImeGlyph viewBox="0 0 24 24"><rect x="1" y="5" width="23" height="15" rx="2" fill="#dff0fa" stroke="#1f7fc4" strokeWidth="2"/><path d="M4 9h17M4 12h17M7 16h11" stroke="#1f7fc4" strokeWidth="2" strokeDasharray="2 1"/></ImeGlyph>
        </ImeBar>
        <ImeLogo viewBox="0 0 38 38"><SLogo /></ImeLogo>
        <Float $x={1639} $y={267} $w={36} $h={329}>
          <FloatHead $h={30}>S<CloseBtn /></FloatHead>
          <VBody>
            <Grip $mb={9} />
            <VSlot $h={29}><Icon n="pad" /><Drop $l={26} $t={23} /></VSlot>
            <VSlot $h={30}><Icon n="pock" /><Drop $l={26} $t={24} /></VSlot>
            <VSlot $h={29}><Icon n="shaft" /></VSlot>
            <VSlot $h={27}><Icon n="groove" /></VSlot>
            <VSlot $h={29}><Icon n="hole" /></VSlot>
            <VSlot $h={29}><Icon n="rib" /></VSlot>
            <VSlot $h={26}><Icon n="slot" /></VSlot>
            <VSlot $h={29}><Icon n="solid" /><Drop $l={26} $t={23} /></VSlot>
            <VSlot $h={29}><Icon n="mfsolid" /></VSlot>
            <VSlot $h={26}><Icon n="solid2" /></VSlot>
          </VBody>
        </Float>
        <Float $x={1518} $y={467} $w={36} $h={178}>
          <FloatHead $h={30}>T<CloseBtn /></FloatHead>
          <VBody>
            <Grip $mb={0} />
            <VSlot $h={39} $pt={5}><Icon n="tr1" /><Drop $l={26} $t={33} /></VSlot>
            <HSep />
            <VSlot $h={36}><Icon n="tr2" /></VSlot>
            <VSlot $h={28}><Icon n="tr3" /><Drop $l={26} $t={22} /></VSlot>
            <HSep />
            <VSlot $h={34}><Icon n="tr4" /><Drop $l={26} $t={29} /></VSlot>
          </VBody>
        </Float>
      </Viewport>
      <BottomBar><Row items={bottom} /></BottomBar>
      <StatusBar>
        <StatusText>Select or a command</StatusText>
        <StatusBox />
      </StatusBar>
      <Taskbar>
        <SearchBox>在这里输入你要搜索的内容</SearchBox>
        <Tile $w={61}><BigGlyph viewBox="0 0 32 32"><circle cx="16" cy="16" r="8.5" fill="none" stroke="#111" strokeWidth="3"/></BigGlyph></Tile>
        <Tile $w={62}><BigGlyph viewBox="0 0 32 32"><path d="M8 7h13M8 25h13M8 12h13v8H8zM25 7v6M25 16v2M25 20v5" fill="none" stroke="#222" strokeWidth="1.5"/></BigGlyph></Tile>
        <Tile $w={63} $under={49}><BigGlyph viewBox="0 0 32 32"><path d="M3 5h11l3 3h12v20H3z" fill="#f5c63f"/><path d="M3 9h26v3H3z" fill="#f9db78"/><path d="M10 27v-7a2 2 0 0 1 2-2h8a2 2 0 0 1 2 2v7h-4v-5h-4v5z" fill="#2277b5"/></BigGlyph></Tile>
        <Tile $w={64}><BigGlyph viewBox="0 0 32 32"><rect width="32" height="32" fill="#12a11d"/><ellipse cx="12.5" cy="13" rx="9" ry="7.5" fill="#fff"/><path d="M7 18l-1 4 5-3z" fill="#fff"/><ellipse cx="21.5" cy="19" rx="7.5" ry="6" fill="#fff" stroke="#12a11d"/><circle cx="9.5" cy="11" r="1.2" fill="#12a11d"/><circle cx="15" cy="11" r="1.2" fill="#12a11d"/><circle cx="19" cy="18" r="1" fill="#12a11d"/><circle cx="24" cy="18" r="1" fill="#12a11d"/></BigGlyph></Tile>
        <Tile $w={60} $active $under={60}><BigGlyph viewBox="0 0 32 32"><defs><radialGradient id="dsg" cx=".7" cy=".5" r=".6"><stop offset="0" stopColor="#f0a050"/><stop offset=".6" stopColor="#50301c"/><stop offset="1" stopColor="#0a0a0a"/></radialGradient></defs><rect width="32" height="32" fill="url(#dsg)"/><path d="M2 30c8-3 12-12 12-26" fill="none" stroke="#2f8ccc" strokeWidth="3"/><text x="9" y="9" fontFamily="Liberation Serif" fontStyle="italic" fontSize="11" fill="#f4f4f4">3</text><text x="2" y="25" fontFamily="Liberation Serif" fontStyle="italic" fontSize="16" fill="#f4f4f4">DS</text></BigGlyph></Tile>
        <Tile $w={62} $under={50}><BigGlyph viewBox="0 0 32 32"><rect x="8" y="1" width="23" height="30" rx="2" fill="#2b6cbf"/><rect x="8" y="1" width="23" height="8" fill="#3f9ae6"/><rect x="8" y="23" width="23" height="8" fill="#1a4a98"/><rect x="1" y="9" width="16" height="16" rx="1" fill="#1d57a8"/><text x="9" y="22" textAnchor="middle" fontFamily="Liberation Sans" fontWeight="700" fontSize="13" fill="#fff">W</text></BigGlyph></Tile>
        <Tile $w={64} $under={50}><BigGlyph viewBox="0 0 32 32"><rect x="3" y="3" width="26" height="26" rx="2" fill="#f8ebe3"/><circle cx="12" cy="18" r="5" fill="#e8773a"/><rect x="21" y="9" width="4" height="15" fill="#e8773a"/><circle cx="13" cy="9" r="2" fill="#f2b596"/></BigGlyph></Tile>
        <Spacer $w={1457 - 13 - 828} />
        {tray.map(([c, g], i) => (
          <Slot key={i} $w={(tray[i + 1] ? tray[i + 1][0] : 1642) - c}><TrayGlyph viewBox="0 0 26 26">{g}</TrayGlyph></Slot>
        ))}
        <Slot $w={39}><TrayGlyph viewBox="0 0 38 38"><SLogo /></TrayGlyph></Slot>
        <Clock><span>20:17</span><span>2020/12/12</span></Clock>
      </Taskbar>
      <BlackStrip />
    </Page>
  );
}
